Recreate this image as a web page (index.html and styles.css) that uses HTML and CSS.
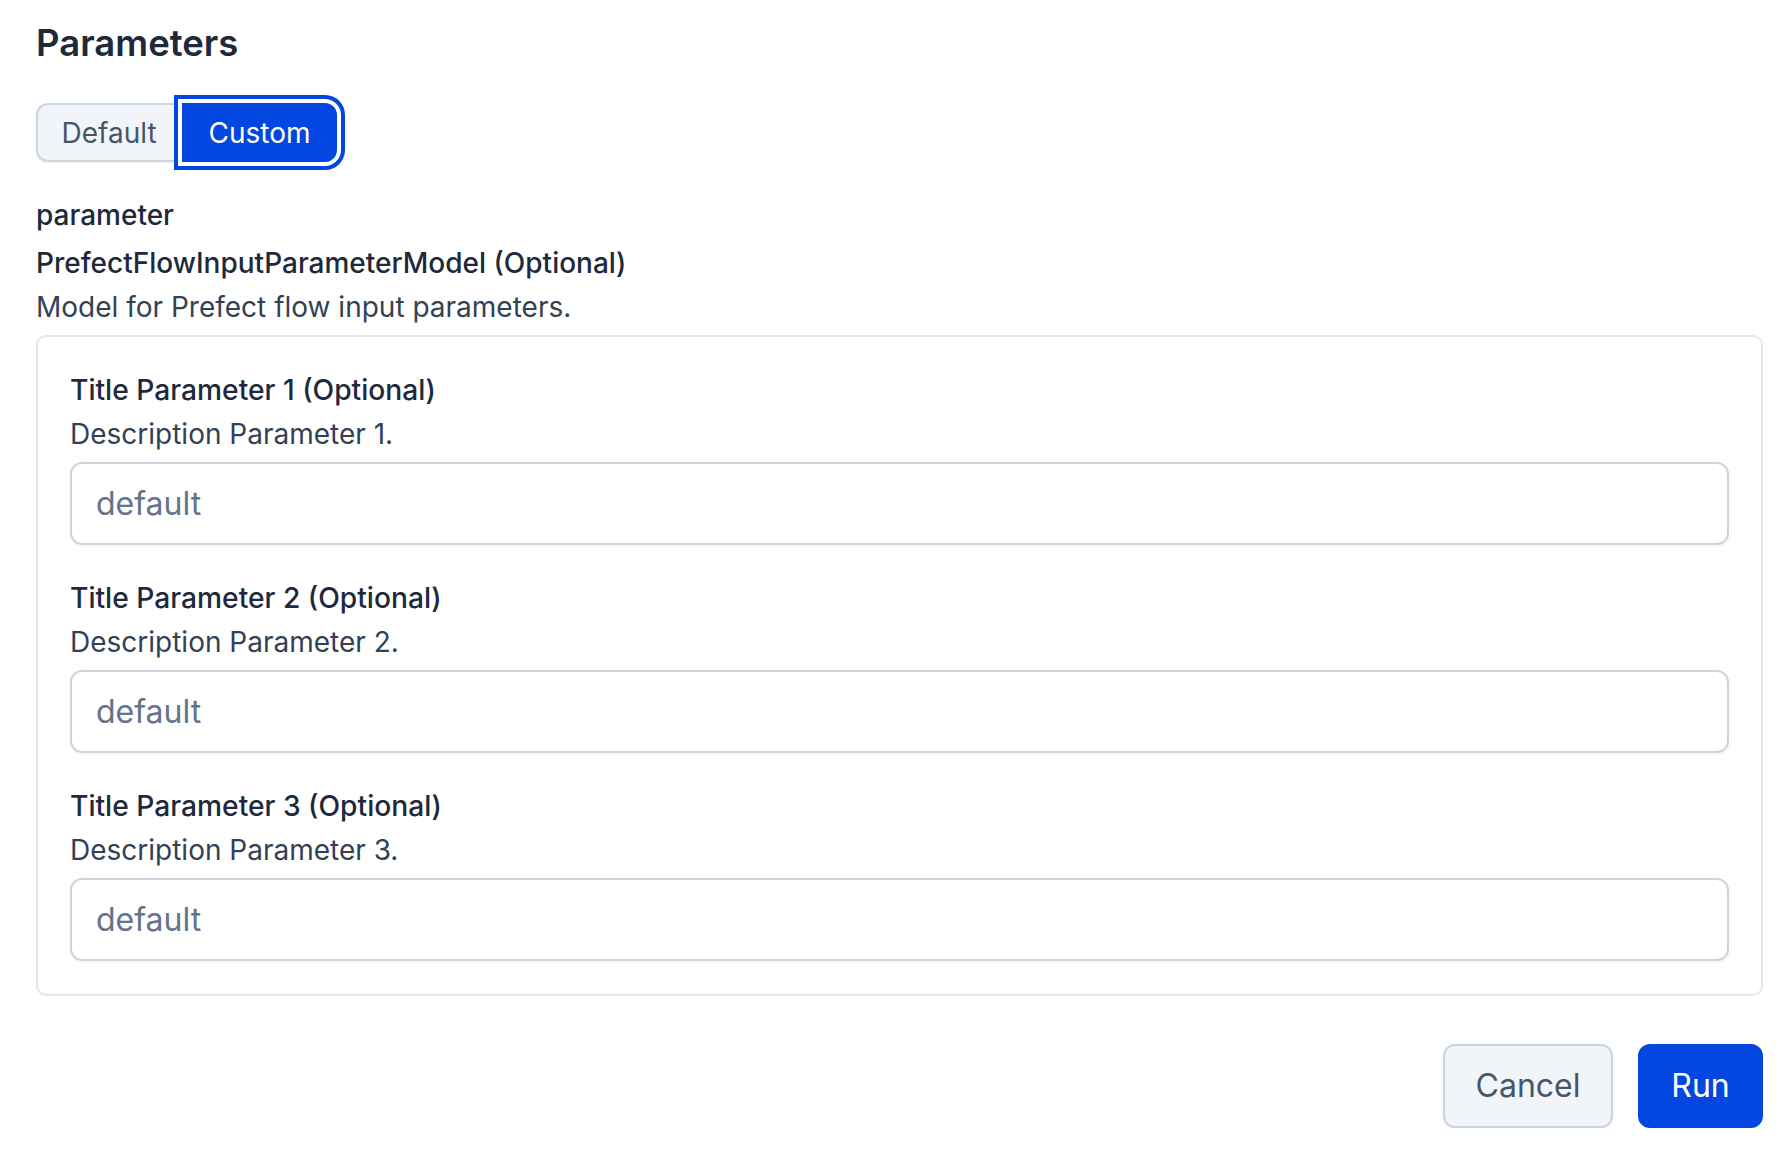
FILE: index.html
```html
<!DOCTYPE html>
<html lang="en">
<head>
<meta charset="utf-8">
<title>Parameters</title>
<link rel="stylesheet" href="styles.css">
</head>
<body>
<div class="page">
  <h2 class="heading">Parameters</h2>
  <div class="toggle">
    <button class="seg seg-default" type="button">Default</button>
    <button class="seg seg-custom" type="button">Custom</button>
  </div>
  <div class="group">
    <div class="group-name">parameter</div>
    <div class="group-title">PrefectFlowInputParameterModel (Optional)</div>
    <div class="group-desc">Model for Prefect flow input parameters.</div>
    <div class="card">
      <div class="field">
        <div class="field-title">Title Parameter 1 (Optional)</div>
        <div class="field-desc">Description Parameter 1.</div>
        <input class="field-input" type="text" placeholder="default">
      </div>
      <div class="field">
        <div class="field-title">Title Parameter 2 (Optional)</div>
        <div class="field-desc">Description Parameter 2.</div>
        <input class="field-input" type="text" placeholder="default">
      </div>
      <div class="field">
        <div class="field-title">Title Parameter 3 (Optional)</div>
        <div class="field-desc">Description Parameter 3.</div>
        <input class="field-input" type="text" placeholder="default">
      </div>
    </div>
  </div>
  <div class="actions">
    <button class="btn btn-cancel" type="button">Cancel</button>
    <button class="btn btn-run" type="button">Run</button>
  </div>
</div>
</body>
</html>
```
FILE: styles.css
```css
* {
  box-sizing: border-box;
}

html, body {
  margin: 0;
  padding: 0;
  background: #ffffff;
}

body {
  font-family: Inter, "Noto Sans", "Liberation Sans", sans-serif;
  color: #1e293b;
}

.page {
  padding: 23px 27px 0 36px;
}

.heading {
  margin: 0;
  font-size: 36.5px;
  line-height: 40px;
  font-weight: 600;
  color: #1e293b;
}

.toggle {
  display: flex;
  margin-top: 40px;
  height: 59px;
}

.seg {
  font-family: inherit;
  font-size: 28px;
  line-height: 1;
  height: 59px;
  padding: 0 20px;
  margin: 0;
  cursor: pointer;
}

.seg-default {
  width: 146px;
  padding-right: 22px;
  background: #f1f5f9;
  color: #475569;
  border: 2px solid #cbd5e1;
  border-right: none;
  border-radius: 12px 0 0 12px;
  box-shadow: 0 1px 2px rgba(15, 23, 42, 0.06);
}

.seg-custom {
  position: relative;
  z-index: 1;
  width: 155px;
  background: #0446e0;
  color: #ffffff;
  border: 2px solid #0446e0;
  border-radius: 0 12px 12px 0;
  box-shadow: 0 0 0 4px #ffffff, 0 0 0 8px #0446e0;
}

.group {
  margin-top: 32px;
}

.group-name {
  font-size: 28px;
  line-height: 42px;
  font-weight: 500;
  color: #1e293b;
}

.group-title {
  margin-top: 6px;
  font-size: 28px;
  line-height: 42px;
  font-weight: 500;
  color: #1e293b;
}

.group-desc {
  margin-top: 3px;
  font-size: 28px;
  line-height: 40px;
  color: #334155;
}

.card {
  margin-top: 8px;
  border: 2px solid #e2e8f0;
  border-radius: 10px;
  padding: 32px 32px 33px;
  display: flex;
  flex-direction: column;
  gap: 32px;
}

.field {
  display: flex;
  flex-direction: column;
}

.field-title {
  font-size: 28.2px;
  line-height: 42px;
  font-weight: 500;
  color: #1e293b;
}

.field-desc {
  margin-top: 3px;
  font-size: 28px;
  line-height: 40px;
  color: #334155;
}

.field-input {
  margin-top: 8px;
  height: 83px;
  width: 100%;
  border: 2px solid #cbd5e1;
  border-radius: 12px;
  padding: 0 24px;
  font-family: inherit;
  font-size: 32px;
  color: #1e293b;
  background: #ffffff;
  box-shadow: 0 1px 3px rgba(15, 23, 42, 0.06);
  outline: none;
}

.field-input::placeholder {
  color: #64748b;
}

.actions {
  margin-top: 48px;
  display: flex;
  justify-content: flex-end;
  gap: 25px;
}

.btn {
  font-family: inherit;
  font-size: 32px;
  line-height: 1;
  height: 84px;
  padding: 0 30px;
  border-radius: 12px;
  cursor: pointer;
  margin: 0;
}

.btn-cancel {
  width: 170px;
  background: #f1f5f9;
  color: #475569;
  border: 2px solid #cbd5e1;
  box-shadow: 0 1px 3px rgba(15, 23, 42, 0.06);
}

.btn-run {
  width: 125px;
  background: #0446e0;
  color: #ffffff;
  border: 2px solid #0446e0;
}
```
